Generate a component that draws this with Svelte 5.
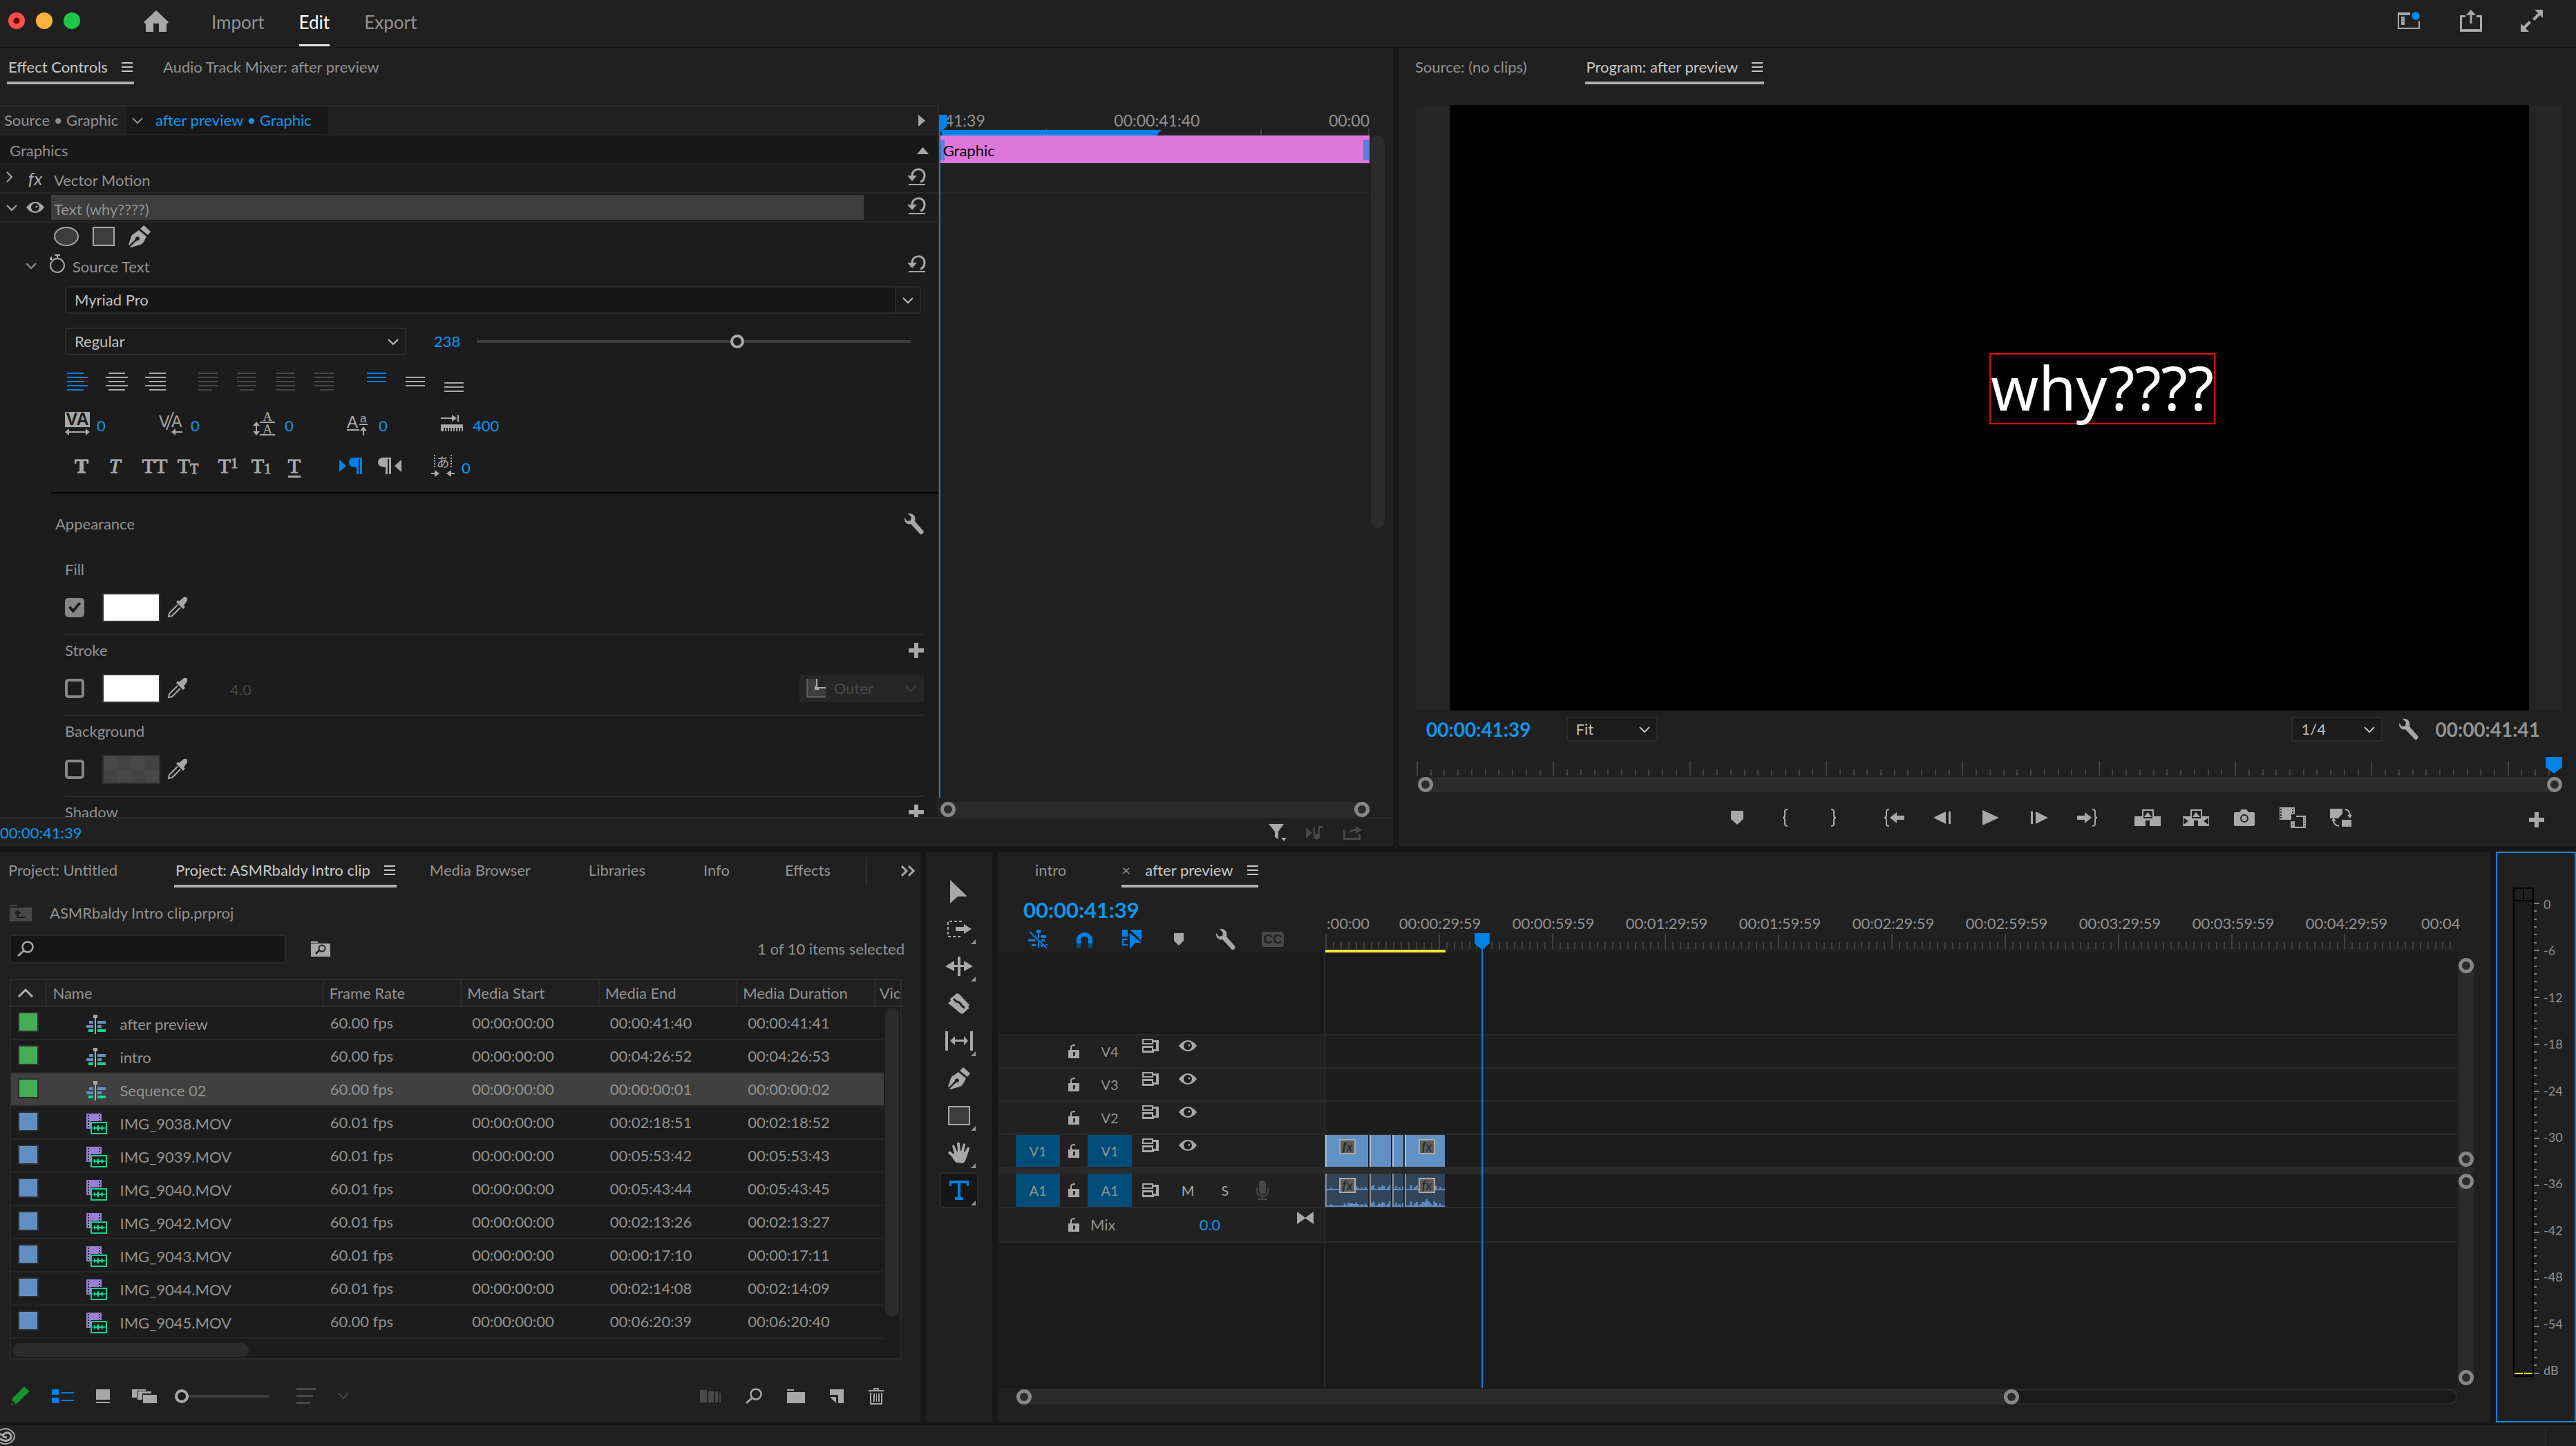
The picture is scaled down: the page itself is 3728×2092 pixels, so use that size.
<script lang="ts">
  // name: [width, height, svg body]
  const icons: Record<string, [number, number, string]> = {
    home: [36, 31, '<path d="M18 0 36 17 33 20V31H22V19H14V31H3V20L0 17Z"/>'],
    menu: [16, 14, '<path d="M0 0H16V2H0ZM0 6H16V8H0ZM0 12H16V14H0Z"/>'],
    workspace: [34, 28, '<path d="M0 2H18V6H2V24H30V14H32V26H0Z"/><path d="M5 8h5v12h-5z"/><path d="M7 10h1v2h-1zM7 14h1v2h-1z" fill="#202020"/><circle cx="26" cy="7" r="6" fill="#0082e6"/>'],
    share: [32, 32, '<path d="M16 0 23 8H17.500V20H14.500V8H9ZM0 8H8V11H3V28H29V11H24V8H32V32H0Z"/>'],
    expand: [32, 32, '<path d="M20 0H32V12L28 8 20 16 17 13 25 5ZM12 32H0V20L4 24 12 16 15 19 7 27Z"/>'],
    down: [16, 9, '<path d="M1 1 8 8 15 1" fill="none" stroke="currentColor" stroke-width="2"/>'],
    right: [9, 16, '<path d="M1 1 8 8 1 15" fill="none" stroke="currentColor" stroke-width="2"/>'],
    sort: [22, 13, '<path d="M1 12 11 2 21 12" fill="none" stroke="currentColor" stroke-width="3"/>'],
    more: [22, 16, '<path d="M2 1 9 8 2 15M12 1 19 8 12 15" fill="none" stroke="currentColor" stroke-width="3"/>'],
    play1: [10, 17, '<path d="M0 0 10 8.500 0 17Z"/>'],
    up: [17, 10, '<path d="M8.500 0 17 10H0Z"/>'],
    reset: [28, 25, '<path d="M0 10H14L7 18Z"/><path d="M7 11C6-2 26-3 25 11Q24 18 19 19" fill="none" stroke="currentColor" stroke-width="3"/><path d="M2 22H26V24H2Z"/>'],
    eye: [26, 16, '<path d="M0 8Q6 0 13 0T26 8Q20 16 13 16T0 8Z"/><circle cx="13" cy="8" r="6" fill="#1c1c1c"/><circle cx="15" cy="7" r="1.500"/>'],
    ellipse: [36, 28, '<ellipse cx="18" cy="14" rx="17" ry="13" fill="#3d3d3d" stroke="currentColor" stroke-width="2"/>'],
    rect: [32, 28, '<path d="M1 1H31V27H1Z" fill="#3d3d3d" stroke="currentColor" stroke-width="2"/>'],
    pen: [32, 32, '<path d="M22 0 32 9 28 14 17 5ZM15 7 26 16 22 24Q20 27 17 28L4 32 2 31 12 22A3 3 0 1 0 10 20L1 29 0 28 4 16Q5 13 8 12Z"/>'],
    watch: [24, 27, '<circle cx="12" cy="16" r="10" fill="none" stroke="currentColor" stroke-width="2"/><path d="M8 0H16V2H13V6H11V2H8ZM1 5 4 3V8H1Z"/>'],
    wrench: [28, 30, '<path d="M5 0 10 5 9 10 4 11 0 6C-1 12 4 17 9 15L23 30Q26 31 28 26L15 11C17 4 12-1 5 0Z"/>'],
    plus: [22, 22, '<path d="M8 0H14V8H22V14H14V22H8V14H0V8H8Z"/>'],
    dropper: [30, 30, '<path d="M17 6 24 0Q30-1 29 5L24 12 26 14 23 17 13 7 16 4Z"/><path d="M15 11 3 23 2 28 7 27 19 15" fill="none" stroke="currentColor" stroke-width="2"/>'],
    outer: [28, 28, '<path d="M0 0H14V14H28V28H0Z" fill="#3d3d3d"/><path d="M1 0V26H28" fill="none" stroke="#5a5a5a" stroke-width="2"/><path d="M14 0H16V12H28V14H18V16H12V10H14Z"/>'],
    alignL: [32, 26, '<path d="M0 0H24V2H0ZM0 6H30V8H0ZM0 12H24V14H0ZM0 18H30V20H0ZM0 24H24V26H0Z"/>'],
    alignC: [32, 26, '<path d="M4 0H28V2H4ZM0 6H32V8H0ZM4 12H28V14H4ZM0 18H32V20H0ZM4 24H28V26H4Z"/>'],
    alignR: [32, 26, '<path d="M7 0H31V2H7ZM1 6H31V8H1ZM7 12H31V14H7ZM1 18H31V20H1ZM7 24H31V26H7Z"/>'],
    justL: [28, 26, '<path d="M0 0H28V2H0ZM0 6H28V8H0ZM0 12H28V14H0ZM0 18H28V20H0ZM0 24H20V26H0Z"/>'],
    justC: [28, 26, '<path d="M0 0H28V2H0ZM0 6H28V8H0ZM0 12H28V14H0ZM0 18H28V20H0ZM4 24H24V26H4Z"/>'],
    justA: [28, 26, '<path d="M0 0H28V2H0ZM0 6H28V8H0ZM0 12H28V14H0ZM0 18H28V20H0ZM0 24H28V26H0Z"/>'],
    justR: [28, 26, '<path d="M0 0H28V2H0ZM0 6H28V8H0ZM0 12H28V14H0ZM0 18H28V20H0ZM8 24H28V26H8Z"/>'],
    top: [28, 26, '<path d="M0 0H28V2H0ZM0 6H28V8H0ZM0 12H28V14H0Z"/>'],
    middle: [28, 26, '<path d="M0 6H28V8H0ZM0 12H28V14H0ZM0 18H28V20H0Z"/>'],
    bottom: [28, 26, '<path d="M0 14H28V16H0ZM0 20H28V22H0ZM0 26H28V28H0Z"/>'],
    tracking: [36, 34, '<path d="M0 0H36V22H0Z"/><text x="18" y="19" text-anchor="middle" font-size="25" font-weight="bold" font-family="Liberation Sans" fill="#1c1c1c">VA</text><path d="M0 29 6 24V28H30V24L36 29 30 34V30H6V34Z"/>'],
    kerning: [36, 34, '<text x="0" y="22" font-size="23" font-family="Liberation Sans">V</text><text x="18" y="22" font-size="23" font-family="Liberation Sans">A</text><path d="M20 0H22L12 26H10Z"/><path d="M18 29 24 24V28H34V30H24V34Z"/>'],
    leading: [36, 34, '<path d="M5 14 10 20H6V28H10L5 34 0 28H4V20H0ZM10 14H32V16H10ZM10 32H32V34H10Z"/><text x="21" y="13" text-anchor="middle" font-size="19" font-family="Liberation Serif">A</text><text x="21" y="31" text-anchor="middle" font-size="19" font-family="Liberation Serif">A</text>'],
    baseline: [36, 34, '<text x="0" y="23" font-size="24" font-family="Liberation Sans">A</text><text x="19" y="15" font-size="17" font-family="Liberation Sans">a</text><path d="M0 25H18V27H0ZM18 17H30V19H18ZM24 21 29 27H25V34H23V27H19Z"/>'],
    tab: [36, 34, '<path d="M0 8H16V4L23 9 16 14V10H0ZM24 4H26V14H24Z"/><path d="M0 18H32V28H30V23H28V28H26V23H24V28H22V23H20V28H18V23H16V28H14V23H12V28H10V23H8V28H6V23H4V28H0Z"/>'],
    ltr: [34, 24, '<path d="M0 3 10 12 0 21ZM22 0H33V24H30V2H28V24H25V14Q14 14 14 7T22 0Z"/>'],
    rtl: [34, 24, '<path d="M34 3 24 12 34 21ZM8 0H19V24H16V2H14V24H11V14Q0 14 0 7T8 0Z"/>'],
    tsume: [34, 32, '<text x="17" y="18" text-anchor="middle" font-size="19" font-family="Noto Sans CJK JP">あ</text><path d="M5 0V20M29 0V20" fill="none" stroke="currentColor" stroke-width="2" stroke-dasharray="2"/><path d="M0 26H5V22L12 27 5 32V28H0ZM34 26H29V22L22 27 29 32V28H34Z"/>'],
    funnel: [26, 26, '<path d="M0 0H22L14 11V22L9 19V11Z"/><path d="M18 20H26L22 25Z"/>'],
    loop: [26, 20, '<path d="M0 2 9 10 0 18ZM11 2H13V18H11ZM18 0H25V3H20V15A4 4 0 1 1 18 12Z"/>'],
    send: [28, 20, '<path d="M0 6H3V17H22V12H25V20H0ZM8 12Q8 4 18 4V0L27 6 18 11V7Q11 7 8 12Z"/>'],
    marker: [18, 20, '<path d="M0 0H18V12L9 20 0 12Z"/>'],
    braceL: [9, 26, '<path d="M8 1Q4 1 4 4V10Q4 13 1 13 4 13 4 16V22Q4 25 8 25" fill="none" stroke="currentColor" stroke-width="2"/>'],
    braceR: [9, 26, '<path d="M1 1Q5 1 5 4V10Q5 13 8 13 5 13 5 16V22Q5 25 1 25" fill="none" stroke="currentColor" stroke-width="2"/>'],
    goIn: [30, 26, '<path d="M8 1Q4 1 4 4V10Q4 13 1 13 4 13 4 16V22Q4 25 8 25" fill="none" stroke="currentColor" stroke-width="2"/><path d="M9 13 19 5V10H30V16H19V21Z"/>'],
    goOut: [30, 26, '<path d="M22 1Q26 1 26 4V10Q26 13 29 13 26 13 26 16V22Q26 25 22 25" fill="none" stroke="currentColor" stroke-width="2"/><path d="M21 13 11 5V10H0V16H11V21Z"/>'],
    stepBack: [26, 18, '<path d="M0 9 18 0V18ZM22 0H25V18H22Z"/>'],
    play: [24, 22, '<path d="M0 0 24 11 0 22Z"/>'],
    stepOn: [26, 18, '<path d="M26 9 8 0V18ZM1 0H4V18H1Z"/>'],
    lift: [38, 24, '<path d="M0 10H38V24H22V16H16V24H0Z"/><path d="M11 0H28V14H11Z"/><path d="M13 2H26V13H13Z" fill="#202020"/><path d="M19 4 25 11H14Z"/>'],
    extract: [38, 24, '<path d="M0 10H38V24H22V16H16V24H0Z"/><path d="M11 0H28V14H11Z"/><path d="M13 2H26V13H13ZM1 12 8 17 1 22ZM37 12 30 17 37 22Z" fill="#202020"/><path d="M19 4 25 11H14Z"/>'],
    camera: [30, 24, '<path d="M2 4H8L11 0H18L21 4H28Q30 4 30 6V22Q30 24 28 24H2Q0 24 0 22V6Q0 4 2 4Z"/><circle cx="15" cy="13" r="6" fill="#202020"/><circle cx="15" cy="13" r="4"/>'],
    compare: [38, 30, '<path d="M0 0H22V10H17V18H0Z"/><path d="M2 2V17M19 2V10" stroke="#202020" stroke-width="2" stroke-dasharray="2"/><path d="M16 20H22V28H34V14H24V12H38V30H16Z"/><path d="M19 20V29M36 14V29" stroke="#202020" stroke-width="1" stroke-dasharray="2"/>'],
    proxy: [32, 28, '<path d="M0 1H18V8L12 15H0ZM17 17H31V27H17Z"/><path d="M22 2Q29 3 29 12M13 26Q5 25 5 17" fill="none" stroke="currentColor" stroke-width="2"/><path d="M25 10H32L29 15ZM2 19 5 14 9 19Z"/>'],
    folderUp: [32, 24, '<path d="M0 0H11V2H0ZM0 4H32V24H0Z"/><path d="M11 7 17 13H13V17H22V19H10V13H6Z" fill="#202020"/>'],
    search: [24, 24, '<circle cx="15" cy="9" r="7.500" fill="none" stroke="currentColor" stroke-width="2.500"/><path d="M10 14 1 22" stroke="currentColor" stroke-width="3"/>'],
    folderSearch: [28, 22, '<path d="M0 0H10V2H0ZM0 3H28V22H0Z"/><circle cx="16" cy="10" r="4.500" fill="none" stroke="#202020" stroke-width="2"/><path d="M12 13 7 18" stroke="#202020" stroke-width="2.500"/>'],
    sequence: [28, 28, '<path d="M4 9H10V13H4ZM16 9H28V13H16ZM0 15H10V19H0ZM16 15H22V19H16Z" fill="#6090c3"/><path d="M3 21H10V25H3ZM16 21H28V25H16Z" fill="#14d490"/><path d="M10 0H16V5H14V28H12V5H10Z"/>'],
    movie: [30, 30, '<path d="M0 0H22V11H6V22H0Z" fill="#9780d6"/><path d="M3 2V21M19 2V11" stroke="#1c1c1c" stroke-width="2" stroke-dasharray="2"/><path d="M7 13H29V29H7Z" fill="#1c1c1c" stroke="#14d490" stroke-width="2"/><path d="M8 20.500H11V17L13 20 15 20 17 16 19 20 21 20 23 17 24 20 28 20.500V21.500L24 22 23 25 21 22 19 22 17 26 15 22 13 22 11 25V21.500H8Z" fill="#14d490"/>'],
    pencil: [28, 28, '<path d="M20 0 28 7 10 24 1 27 3 17Z"/><path d="M3 20 7 24 2 26Z" fill="#202020"/>'],
    list: [32, 20, '<path d="M0 0H10V8H0ZM0 12H10V20H0ZM14 4H32V6H14ZM14 15H32V17H14Z"/>'],
    iconView: [20, 20, '<path d="M0 0H20V15H0ZM0 18H20V20H0Z"/>'],
    freeform: [36, 20, '<path d="M0 0H20V2H7V12H0ZM8 3H28V6H15V15H8ZM16 8H36V20H16Z"/>'],
    sortMenu: [28, 24, '<path d="M0 0H28V3H0ZM0 10H24V13H0ZM0 20H20V23H0Z"/>'],
    automate: [30, 18, '<path d="M0 0H10V18H0ZM12 2H20V18H12ZM22 2H26V18H22ZM28 4H30V18H28Z"/>'],
    folder: [26, 20, '<path d="M0 0H10V2H0ZM0 4H26V20H0Z"/>'],
    newItem: [20, 20, '<path d="M0 0H20V20H12V8H0ZM0 11H9V20Z"/>'],
    trash: [22, 24, '<path d="M0 3H22V5H0ZM7 0H15V4H13V2H9V4H7ZM2 7H4V22H18V7H20V24H2ZM7 8H9V20H7ZM11 8H12V20H11ZM14 8H16V20H14Z"/>'],
    cursor: [26, 34, '<path d="M0 0 25 24 11 24 0 34Z"/>'],
    trackSelect: [36, 24, '<path d="M22 1H2V23H20" fill="none" stroke="currentColor" stroke-width="2" stroke-dasharray="4 3"/><path d="M13 9H25V5L36 12 25 19V15H13Z"/>'],
    ripple: [40, 28, '<path d="M18 0H22V28H18ZM0 14 13 6V12H27V6L40 14 27 21V15H13V21Z"/>'],
    razor: [32, 32, '<path d="M0 15 4 12 3 9 13 1 16 2 31 18 29 21 31 22 21 31 18 30 1 16Z"/><path d="M8 9 12 13 16 14 21 20 24 22" fill="none" stroke="#202020" stroke-width="3"/>'],
    slip: [40, 28, '<path d="M0 0H4V28H0ZM36 0H40V28H36ZM7 14 14 7V12H27V7L33 14 27 20V15H14V20Z"/>'],
    box: [32, 28, '<path d="M1 1H31V27H1Z" fill="#3d3d3d" stroke="currentColor" stroke-width="2"/>'],
    hand: [32, 32, '<path d="M12 30Q8 27 6 22L0 16Q0 13 4 14L8 18 9 17 6 6Q7 3 9 5L13 14 14 13 13 2Q15-1 17 2L18 13 19 13 22 3Q24 1 25 4L23 14 24 15 28 8Q31 7 31 10L27 22Q25 29 21 31Z"/>'],
    type: [28, 28, '<path d="M0 0H28V8H25V4H16V24H20V28H8V24H12V4H3V8H0Z"/>'],
    nest: [28, 28, '<path d="M12 0H18V5H16V27H14V5H12ZM5 8H11V11H5ZM0 14H10V17H0ZM19 8H26V12H18ZM19 14H24V17H19ZM5 21H11V24H5ZM18 21H28V25H18Z"/><path d="M1 3 27 26" stroke="#202020" stroke-width="4"/><path d="M2 3 27 27" stroke="currentColor" stroke-width="2"/>'],
    magnet: [24, 25, '<path d="M3 18V11A9 9 0 0 1 20 11V18" fill="none" stroke="currentColor" stroke-width="6"/><path d="M0 18H6V25H0ZM17 18H23V25H17Z" fill="#004d7a"/>'],
    linked: [28, 28, '<path d="M0 0H8V10H0ZM11 0H28V16ZM0 13H8V15H2V21H8V23H0ZM11 5 28 19H19L11 28Z"/>'],
    tag: [14, 18, '<path d="M0 0H14V11L7 18 0 11Z"/>'],
    cc: [32, 22, '<rect width="32" height="22" rx="4"/><text x="16" y="17" text-anchor="middle" font-size="19" font-weight="bold" font-family="Liberation Sans" fill="#202020">CC</text>'],
    lock: [16, 20, '<path d="M0 8H16V20H0Z"/><path d="M4 8V4Q4 1 10 1" fill="none" stroke="currentColor" stroke-width="2"/><path d="M7 11H10V14L9 17H7Z" fill="#202020"/>'],
    sync: [24, 20, '<path d="M0 0H16V2H24V18H17V20H0V10H16V15H20V5H16V8H0ZM2 2V6H14V2ZM2 13V17H14V13Z" fill-rule="evenodd"/>'],
    mic: [18, 28, '<rect x="4" width="10" height="20" rx="5"/><path d="M1 10V15Q1 22 9 22T17 15V10" fill="none" stroke="currentColor" stroke-width="2"/><path d="M8 22H10V26H16V28H2V26H8Z"/>'],
    bowtie: [24, 18, '<path d="M0 0 10 7V11L0 18ZM24 0 14 7V11L24 18Z"/><path d="M10 8H14V10H10Z"/>'],
    cloud: [26, 24, '<path d="M0 3Q8-1 15 3 21 7 21 12T15 21Q8 25 0 21" fill="none" stroke="currentColor" stroke-width="2"/><path d="M0 15Q5 20 11 18 17 16 16 11 14 6 9 7 6 8 4 10M0 9Q3 9 6 13L10 14" fill="none" stroke="currentColor" stroke-width="3"/>'],
  };

  interface MediaItem {
    name: string;
    seq?: boolean;
    rate: string;
    end: string;
    duration: string;
  }

  const items: MediaItem[] = [
    { name: 'after preview', seq: true, rate: '60.00 fps', end: '00:00:41:40', duration: '00:00:41:41' },
    { name: 'intro', seq: true, rate: '60.00 fps', end: '00:04:26:52', duration: '00:04:26:53' },
    { name: 'Sequence 02', seq: true, rate: '60.00 fps', end: '00:00:00:01', duration: '00:00:00:02' },
    { name: 'IMG_9038.MOV', rate: '60.01 fps', end: '00:02:18:51', duration: '00:02:18:52' },
    { name: 'IMG_9039.MOV', rate: '60.01 fps', end: '00:05:53:42', duration: '00:05:53:43' },
    { name: 'IMG_9040.MOV', rate: '60.01 fps', end: '00:05:43:44', duration: '00:05:43:45' },
    { name: 'IMG_9042.MOV', rate: '60.01 fps', end: '00:02:13:26', duration: '00:02:13:27' },
    { name: 'IMG_9043.MOV', rate: '60.01 fps', end: '00:00:17:10', duration: '00:00:17:11' },
    { name: 'IMG_9044.MOV', rate: '60.01 fps', end: '00:02:14:08', duration: '00:02:14:09' },
    { name: 'IMG_9045.MOV', rate: '60.00 fps', end: '00:06:20:39', duration: '00:06:20:40' },
  ];
  let selected = $state('Sequence 02');

  const aligns = [['alignL', 'alignC', 'alignR'], ['justL', 'justC', 'justA', 'justR'], ['top', 'middle', 'bottom']];
  const metrics = [['tracking', '0'], ['kerning', '0'], ['leading', '0'], ['baseline', '0'], ['tab', '400']];
  const appearance = [
    { name: 'Fill', on: true },
    { name: 'Stroke', on: false },
    { name: 'Background', on: false },
  ];

  const transport = [
    ['marker', 'braceL', 'braceR'],
    ['goIn', 'stepBack', 'play', 'stepOn', 'goOut'],
    ['lift', 'extract', 'camera', 'compare', 'proxy'],
  ];
  const tools = ['cursor', 'trackSelect', 'ripple', 'razor', 'slip', 'pen', 'box', 'hand', 'type'];
  const plainTools = ['cursor', 'razor', 'pen'];
  let tool = $state('type');

  const timelineTools = ['nest', 'magnet', 'linked', 'tag', 'wrench', 'cc'];
  const rulerLabels = ['00:00:29:59', '00:00:59:59', '00:01:29:59', '00:01:59:59', '00:02:29:59', '00:02:59:59', '00:03:29:59', '00:03:59:59', '00:04:29:59'];
  const videoTracks = ['V4', 'V3', 'V2', 'V1'];

  // clip lengths as a share of the visible timeline
  const clips = [
    { w: 3.8, fx: true, wave: [0, 0, 2, 0, 0, 0, 0, 0, 0, 3, 0, 4, 3, 3, 2, 4, 2, 0, 2, 0, 3, 0] },
    { w: 1.85, fx: false, wave: [4, 6, 0, 0, 3, 2, 5, 4, 0, 2, 6] },
    { w: 1, fx: false, wave: [0, 4, 0, 2, 0, 4] },
    { w: 3.55, fx: true, wave: [0, 0, 6, 0, 3, 5, 0, 2, 5, 5, 9, 6, 3, 0, 6, 4, 0, 3, 0, 0] },
  ];

  const wavePath = (wave: number[], base: number) =>
    wave.map((v, i) => `M${i * 3} ${base - v}h3V${base + 2}h-3z`).join('');

  const dbLabels = ['0', '-6', '-12', '-18', '-24', '-30', '-36', '-42', '-48', '-54', 'dB'];
</script>

{#snippet icon(name: string)}
  {@const [w, h, body] = icons[name]}
  <svg class="icon" width={w} height={h} viewBox="0 0 {w} {h}" aria-hidden="true">{@html body}</svg>
{/snippet}

{#snippet zoomBar(cls: string)}
  <div class="zoombar {cls}"><i></i><i></i></div>
{/snippet}

<div class="app">
  <header class="topbar">
    <div class="lights"><i class="red"></i><i class="amber"></i><i class="green"></i></div>
    <button class="home" aria-label="Home">{@render icon('home')}</button>
    <nav>
      <a href="#import">Import</a>
      <a href="#edit" class="active">Edit</a>
      <a href="#export">Export</a>
    </nav>
    <div class="top-actions">
      <button aria-label="Workspaces">{@render icon('workspace')}</button>
      <button aria-label="Quick export">{@render icon('share')}</button>
      <button aria-label="Full screen">{@render icon('expand')}</button>
    </div>
  </header>

  <div class="row upper">
    <section class="panel effects">
      <div class="tabs">
        <button class="tab active">Effect Controls {@render icon('menu')}</button>
        <button class="tab">Audio Track Mixer: after preview</button>
      </div>

      <div class="fx-body">
        <div class="fx-list">
          <div class="fx-row crumbs">
            <span class="source">Source • Graphic</span>
            <span class="clip-name">{@render icon('down')}<a href="#clip">after preview • Graphic</a></span>
            <button class="end wide" aria-label="Show timeline">{@render icon('play1')}</button>
          </div>
          <div class="fx-row graphics">Graphics <button class="end" aria-label="Collapse">{@render icon('up')}</button></div>
          <div class="fx-row">
            <button class="twirl small" aria-label="Expand">{@render icon('right')}</button>
            <span class="fx">fx</span>
            <span class="fx-name">Vector Motion</span>
            <button class="reset" aria-label="Reset">{@render icon('reset')}</button>
          </div>
          <div class="fx-row">
            <button class="twirl" aria-label="Collapse">{@render icon('down')}</button>
            <span class="fx">{@render icon('eye')}</span>
            <span class="fx-name chosen">Text (why????)</span>
            <button class="reset" aria-label="Reset">{@render icon('reset')}</button>
          </div>
          <div class="fx-row plain masks">
            <button aria-label="Ellipse mask">{@render icon('ellipse')}</button>
            <button aria-label="Rectangle mask">{@render icon('rect')}</button>
            <button aria-label="Pen mask">{@render icon('pen')}</button>
          </div>
          <div class="fx-row plain source-text">
            {@render icon('down')}
            <button aria-label="Toggle animation">{@render icon('watch')}</button>
            <span>Source Text</span>
            <button class="reset" aria-label="Reset">{@render icon('reset')}</button>
          </div>

          <div class="text-props">
            <div class="select font">
              <select aria-label="Font"><option>Myriad Pro</option></select>
              <span>{@render icon('down')}</span>
            </div>
            <div class="style-row">
              <div class="select style">
                <select aria-label="Font style"><option>Regular</option></select>
                <span>{@render icon('down')}</span>
              </div>
              <button class="num">238</button>
              <input type="range" aria-label="Font size" min="0" max="395" value="238" />
            </div>
            <div class="aligns">
              {#each aligns as group, g}
                <div>
                  {#each group as name, i}
                    <button class:blue={i === 0 && g !== 1} class:dim={g === 1} aria-label={name}>{@render icon(name)}</button>
                  {/each}
                </div>
              {/each}
            </div>
            <div class="metrics">
              {#each metrics as [name, value]}
                <div>{@render icon(name)}<button class="num" aria-label={name}>{value}</button></div>
              {/each}
            </div>
            <div class="faux">
              <div>
                <button aria-label="Faux bold"><b>T</b></button>
                <button aria-label="Faux italic"><em>T</em></button>
              </div>
              <div>
                <button aria-label="All caps">TT</button>
                <button aria-label="Small caps">T<small>T</small></button>
              </div>
              <div>
                <button aria-label="Superscript">T<sup>1</sup></button>
                <button aria-label="Subscript">T<sub>1</sub></button>
                <button aria-label="Underline"><u>T</u></button>
              </div>
              <div class="direction">
                <button class="blue" aria-label="Left to right">{@render icon('ltr')}</button>
                <button aria-label="Right to left">{@render icon('rtl')}</button>
              </div>
              <div class="tsume">{@render icon('tsume')}<button class="num" aria-label="Tsume">0</button></div>
            </div>
          </div>

          <div class="appearance">
            <div class="appearance-head">Appearance <button aria-label="Settings">{@render icon('wrench')}</button></div>
            {#each appearance as part}
              <div class="part">
                <div class="part-head">
                  {part.name}
                  {#if part.name === 'Stroke'}<button aria-label="Add stroke">{@render icon('plus')}</button>{/if}
                </div>
                <div class="part-body">
                  <input type="checkbox" aria-label={part.name} checked={part.on} />
                  <button class="swatch" class:checker={part.name === 'Background'} aria-label="{part.name} colour"></button>
                  <button aria-label="Pick colour">{@render icon('dropper')}</button>
                  {#if part.name === 'Stroke'}
                    <span class="width">4.0</span>
                    <div class="select outer">
                      {@render icon('outer')}
                      <select aria-label="Stroke type" disabled><option>Outer</option></select>
                      <span>{@render icon('down')}</span>
                    </div>
                  {/if}
                </div>
              </div>
            {/each}
            <div class="part-head">Shadow <button aria-label="Add shadow">{@render icon('plus')}</button></div>
          </div>
        </div>

        <div class="mini">
          <div class="mini-ruler">
            <div class="mini-labels"><span>41:39</span><span>00:00:41:40</span><span>00:00</span></div>
            <div class="mini-ticks"><i></i><i></i><i></i><i></i></div>
            <div class="mini-range"></div>
          </div>
          <div class="mini-main">
            <div class="mini-lane">
              <div class="mini-clip">Graphic</div>
              <div class="mini-row"></div>
            </div>
            <div class="mini-scroll"></div>
          </div>
          <div class="mini-zoom">{@render zoomBar('')}</div>
          <div class="mini-head"></div>
        </div>
      </div>

      <div class="fx-foot">
        <span class="tc">00:00:41:39</span>
        <button aria-label="Filter">{@render icon('funnel')}</button>
        <button class="dim" aria-label="Play audio">{@render icon('loop')}</button>
        <button class="dim" aria-label="Export">{@render icon('send')}</button>
      </div>
    </section>

    <section class="panel program">
      <div class="tabs">
        <button class="tab">Source: (no clips)</button>
        <button class="tab active">Program: after preview {@render icon('menu')}</button>
      </div>
      <div class="monitor">
        <div class="frame"><span class="title">why????</span></div>
      </div>
      <div class="monitor-bar">
        <span class="tc big">00:00:41:39</span>
        <div class="select">
          <select aria-label="Zoom level"><option>Fit</option></select>
          <span>{@render icon('down')}</span>
        </div>
        <div class="select res">
          <select aria-label="Playback resolution"><option>1/4</option></select>
          <span>{@render icon('down')}</span>
        </div>
        <button aria-label="Settings">{@render icon('wrench')}</button>
        <span class="tc big grey">00:00:41:41</span>
      </div>
      <div class="monitor-ruler">
        {#each { length: 84 } as _, i}<i class:major={i % 10 === 0}></i>{/each}
        <span class="head"></span>
      </div>
      {@render zoomBar('full')}
      <div class="transport">
        {#each transport as group}
          <div>
            {#each group as name}<button aria-label={name}>{@render icon(name)}</button>{/each}
          </div>
        {/each}
        <button class="add" aria-label="Button editor">{@render icon('plus')}</button>
      </div>
    </section>
  </div>

  <div class="row lower">
    <section class="panel project">
      <div class="tabs">
        <button class="tab">Project: Untitled</button>
        <button class="tab active">Project: ASMRbaldy Intro clip {@render icon('menu')}</button>
        <button class="tab">Media Browser</button>
        <button class="tab">Libraries</button>
        <button class="tab">Info</button>
        <button class="tab">Effects</button>
        <button class="overflow" aria-label="More panels">{@render icon('more')}</button>
      </div>
      <div class="path"><span class="dim">{@render icon('folderUp')}</span>ASMRbaldy Intro clip.prproj</div>
      <div class="find">
        <label class="search">{@render icon('search')}<input type="text" aria-label="Search" /></label>
        <button aria-label="New search bin">{@render icon('folderSearch')}</button>
        <span>1 of 10 items selected</span>
      </div>
      <div class="media">
        <table>
          <colgroup><col class="c-label" /><col class="c-name" /><col /><col /><col /><col /><col class="c-rest" /></colgroup>
          <thead>
            <tr>
              <th aria-label="Label">{@render icon('sort')}</th>
              <th>Name</th><th>Frame Rate</th><th>Media Start</th><th>Media End</th><th>Media Duration</th><th>Vic</th>
            </tr>
          </thead>
          <tbody>
            {#each items as item}
              <tr class:selected={selected === item.name} onclick={() => (selected = item.name)}>
                <td><i class="label" class:green={item.seq}></i></td>
                <td><span class="name"><span>{@render icon(item.seq ? 'sequence' : 'movie')}</span>{item.name}</span></td>
                <td>{item.rate}</td>
                <td>00:00:00:00</td>
                <td>{item.end}</td>
                <td>{item.duration}</td>
                <td></td>
              </tr>
            {/each}
          </tbody>
        </table>
        <div class="h-scroll"></div>
        <div class="v-scroll"><i></i></div>
      </div>
      <div class="project-foot">
        <button class="pencil" aria-label="Writable">{@render icon('pencil')}</button>
        <button class="blue" aria-label="List view">{@render icon('list')}</button>
        <button aria-label="Icon view">{@render icon('iconView')}</button>
        <button aria-label="Freeform view">{@render icon('freeform')}</button>
        <input type="range" aria-label="Thumbnail size" min="0" max="100" value="0" />
        <button class="dim" aria-label="Sort">{@render icon('sortMenu')}</button>
        <button class="dim" aria-label="Sort options">{@render icon('down')}</button>
        <div class="right">
          <button class="dim" aria-label="Automate">{@render icon('automate')}</button>
          <button aria-label="Find">{@render icon('search')}</button>
          <button aria-label="New bin">{@render icon('folder')}</button>
          <button aria-label="New item">{@render icon('newItem')}</button>
          <button aria-label="Clear">{@render icon('trash')}</button>
        </div>
      </div>
    </section>

    <section class="panel tools">
      {#each tools as name}
        <button class:on={tool === name} class:corner={!plainTools.includes(name)} aria-label={name} onclick={() => (tool = name)}>
          {@render icon(name)}
        </button>
      {/each}
    </section>

    <section class="panel timeline">
      <div class="tabs">
        <button class="tab">intro</button>
        <button class="tab active"><span class="close">×</span>after preview {@render icon('menu')}</button>
      </div>
      <div class="tl-head">
        <div class="tl-left">
          <span class="tc huge">00:00:41:39</span>
          <div class="tl-tools">
            {#each timelineTools as name, i}
              <button class:blue={i < 3} class:dim={name === 'cc'} aria-label={name}>{@render icon(name)}</button>
            {/each}
          </div>
        </div>
        <div class="tl-ruler">
          <div class="tl-labels">
            <span class="half">:00:00</span>
            {#each rulerLabels as label}<span>{label}</span>{/each}
            <span class="half last">00:04</span>
          </div>
          <div class="tl-ticks">{#each { length: 150 } as _, i}<i class:major={i % 15 === 0}></i>{/each}</div>
          <div class="tl-range"></div>
        </div>
      </div>

      <div class="tl-body">
        <div class="half-body video">
          <div class="lanes">
            <div class="blank"><div></div></div>
            {#each videoTracks as track}
              <div class="track">
                <div class="track-head">
                  <span class="patch" class:on={track === 'V1'}>{track === 'V1' ? 'V1' : ''}</span>
                  <button class="lock" aria-label="Lock {track}">{@render icon('lock')}</button>
                  <button class="patch" class:on={track === 'V1'}>{track}</button>
                  <button class="raised" aria-label="Sync lock">{@render icon('sync')}</button>
                  <button class="raised" aria-label="Toggle output">{@render icon('eye')}</button>
                </div>
                <div class="lane">
                  {#if track === 'V1'}
                    {#each clips as clip}
                      <div class="clip" style="width: {clip.w}%">{#if clip.fx}<span class="badge">fx</span>{/if}</div>
                    {/each}
                  {/if}
                </div>
              </div>
            {/each}
          </div>
          {@render zoomBar('vert')}
        </div>
        <div class="splitter"></div>
        <div class="half-body audio">
          <div class="lanes">
            <div class="track">
              <div class="track-head">
                <span class="patch on">A1</span>
                <button class="lock" aria-label="Lock A1">{@render icon('lock')}</button>
                <button class="patch on">A1</button>
                <button aria-label="Sync lock">{@render icon('sync')}</button>
                <button class="letter">M</button>
                <button class="letter">S</button>
                <button class="dim" aria-label="Voice-over">{@render icon('mic')}</button>
              </div>
              <div class="lane">
                {#each clips as clip}
                  <div class="clip sound" style="width: {clip.w}%">
                    <svg viewBox="0 0 {clip.wave.length * 3} 48" preserveAspectRatio="none" aria-hidden="true">
                      <path d={wavePath(clip.wave, 22) + wavePath(clip.wave, 46)} />
                    </svg>
                    {#if clip.fx}<span class="badge">fx</span>{/if}
                  </div>
                {/each}
              </div>
            </div>
            <div class="track">
              <div class="track-head mix">
                <span class="patch"></span>
                <button class="lock" aria-label="Lock mix">{@render icon('lock')}</button>
                <span class="mix-name">Mix</span>
                <button class="num">0.0</button>
                <button class="bowtie" aria-label="Keyframes">{@render icon('bowtie')}</button>
              </div>
              <div class="lane"></div>
            </div>
            <div class="blank"><div></div></div>
          </div>
          {@render zoomBar('vert')}
        </div>
        <div class="playhead-area"><div class="playhead"></div></div>
      </div>
      <div class="tl-zoom">{@render zoomBar('')}</div>
    </section>

    <section class="panel meters">
      <div class="meter">
        <div class="peak"><i></i><i></i></div>
        <div class="level"><i></i><i></i></div>
      </div>
      <div class="db-ticks">{#each { length: 61 } as _, i}<i class:major={i % 6 === 0}></i>{/each}</div>
      <div class="db-labels">{#each dbLabels as label}<span>{label}</span>{/each}</div>
    </section>
  </div>

  <footer class="status">{@render icon('cloud')}<i></i></footer>
</div>

<style>
  :global(body) {
    margin: 0;
    background: #161616;
  }

  .app, .app * {
    box-sizing: border-box;
  }

  .app {
    display: flex;
    flex-direction: column;
    height: 100vh;
    overflow: hidden;
    font-family: Lato, "Noto Sans", sans-serif;
    font-size: 22px;
    line-height: 28px;
    color: #929292;
    white-space: nowrap;
  }

  button, select, input {
    font: inherit;
    color: inherit;
    background: none;
    border: 0;
    padding: 0;
    margin: 0;
  }

  button {
    display: flex;
    align-items: center;
    justify-content: center;
    color: #a8a8a8;
  }

  a {
    color: inherit;
    text-decoration: none;
  }

  .icon {
    display: block;
    flex: none;
    fill: currentColor;
    overflow: visible;
    color: inherit;
  }

  .blue { color: #0082e6; }
  .dim { color: #484848; }
  .num, .tc { color: #0c98ee; }

  .topbar {
    flex: none;
    display: flex;
    align-items: center;
    height: 68px;
    margin-bottom: 2px;
    background: #202020;
    font-size: 26px;
  }

  .lights {
    display: flex;
    gap: 16px;
    padding: 0 92px 8px 12px;
  }

  .lights i {
    width: 24px;
    height: 24px;
    border-radius: 50%;
  }

  .lights .red { background: radial-gradient(circle, #6d0000 4px, #ff4f4d 5px); }
  .lights .amber { background: #ffb23e; }
  .lights .green { background: #1dc548; }

  .home { padding-bottom: 8px; }

  nav {
    display: flex;
    gap: 50px;
    height: 100%;
    margin-left: 62px;
  }

  nav a {
    height: 67px;
    line-height: 64px;
    border-bottom: 3px solid transparent;
  }

  nav .active {
    color: #fff;
    border-color: #e6e6e6;
  }

  .top-actions {
    display: flex;
    gap: 56px;
    margin: 0 48px 8px auto;
  }

  .row {
    display: grid;
    gap: 8px;
    min-height: 0;
  }

  .upper {
    flex: 1154;
    grid-template: minmax(0, 1fr) / minmax(0, 2016fr) minmax(0, 1704fr);
  }

  .lower {
    flex: 826;
    grid-template: minmax(0, 1fr) / minmax(0, 1332fr) 96px minmax(0, 2160fr) 116px;
    margin-top: 8px;
  }

  .panel {
    display: flex;
    flex-direction: column;
    min-width: 0;
    background: #202020;
    overflow: hidden;
  }

  .program { padding: 0 20px 0 26px; }

  .tabs {
    flex: none;
    display: flex;
    align-items: flex-start;
  }

  .tab {
    height: 52px;
    padding: 6px 2px 0;
    color: #929292;
    border-bottom: 4px solid transparent;
  }

  .tab.active {
    color: #c8c8c8;
    border-color: #b0b0b0;
  }

  .tab .icon { margin-left: 20px; }

  .effects .tabs, .program .tabs { height: 82px; }
  .effects .tabs { padding-left: 10px; gap: 40px; }
  .program .tabs { margin-left: -4px; gap: 82px; }

  /* effect controls */
  .fx-body {
    flex: 1;
    display: flex;
    min-height: 0;
    border-bottom: 2px solid #2a2a2a;
  }

  .fx-list {
    flex: 1358;
    min-width: 0;
    overflow: hidden;
    background: #1c1c1c;
    border-top: 2px solid #2a2a2a;
    border-right: 2px solid #2a2a2a;
  }

  .fx-row {
    display: flex;
    align-items: center;
    height: 42px;
    border-bottom: 2px solid #262626;
  }

  .fx-row.plain { border-color: transparent; }
  .crumbs { background: #202020; }
  .source { width: 184px; padding-left: 6px; }

  .clip-name {
    display: flex;
    align-items: center;
    gap: 18px;
    align-self: stretch;
    padding: 0 24px 0 7px;
    background: #181818;
  }

  .clip-name a { color: #0c98ee; }

  .end { margin: 0 13px 0 auto; }
  .end.wide { margin-right: 18px; }
  .graphics { background: #181818; padding: 4px 0 0 14px; }

  .twirl { width: 34px; }
  .twirl.small { padding: 0 8px 4px 0; }

  .fx {
    display: flex;
    justify-content: center;
    width: 34px;
    margin-right: 6px;
    color: #a8a8a8;
    font-size: 26px;
    font-style: italic;
  }

  .fx-name {
    width: 1176px;
    height: 36px;
    padding: 7px 4px 0;
  }

  .chosen { background: #3d3d3d; }
  .reset { margin: 0 16px 4px auto; }

  .masks { gap: 20px; padding-left: 78px; }
  .source-text { padding-left: 37px; }
  .source-text > span { padding-top: 4px; }
  .source-text button:first-of-type { margin: 0 10px 6px 18px; }

  .text-props {
    margin: 8px 0 0 74px;
    padding: 0 24px 8px 20px;
    border-bottom: 2px solid #000;
  }

  .select {
    position: relative;
    height: 40px;
    color: #c0c0c0;
    background: #1b1b1b;
    border: 2px solid #2b2b2b;
    border-radius: 4px;
  }

  .select select {
    appearance: none;
    width: 100%;
    height: 100%;
    padding: 0 12px;
    opacity: 1;
  }

  .select > span {
    position: absolute;
    top: 0;
    right: 0;
    bottom: 0;
    display: flex;
    align-items: center;
    padding: 0 9px;
    pointer-events: none;
  }

  .select.font { background: #161616; }

  .font > span {
    background: #1b1b1b;
    border-left: 2px solid #2b2b2b;
  }

  .style-row {
    display: flex;
    align-items: center;
    margin: 20px 14px 8px 0;
  }

  .style {
    width: 494px;
    margin-right: 40px;
  }

  input[type='range'] {
    appearance: none;
    height: 24px;
    background: linear-gradient(#3d3d3d, #3d3d3d) center / 100% 4px no-repeat;
  }

  input[type='range']::-webkit-slider-thumb {
    appearance: none;
    width: 20px;
    height: 20px;
    border: 4px solid #a8a8a8;
    border-radius: 50%;
    background: #1c1c1c;
  }

  .style-row input { flex: 1; margin-left: 24px; }

  .aligns, .metrics, .faux, .aligns div, .metrics div, .faux div {
    display: flex;
    align-items: center;
  }

  .aligns {
    gap: 20px;
    height: 60px;
    margin-left: -9px;
  }

  .aligns button { width: 56px; }

  .metrics { height: 62px; }

  .metrics div {
    gap: 10px;
    width: 136px;
    color: #a8a8a8;
  }

  .metrics .num, .tsume .num { padding-top: 6px; }

  .faux {
    gap: 10px;
    height: 60px;
    font-family: "Liberation Serif", serif;
    font-size: 30px;
  }

  .faux button {
    width: 48px;
    -webkit-text-stroke: 1px currentColor;
  }

  .faux small, .faux sub, .faux sup {
    font-size: 20px;
    line-height: 20px;
  }

  .faux small { align-self: flex-end; }
  .faux sup { align-self: flex-start; }
  .faux sub { align-self: flex-end; }
  .faux u { text-underline-offset: 4px; }
  .faux .direction { margin-left: 20px; }
  .faux .direction button { width: 56px; }

  .faux .tsume {
    gap: 10px;
    margin-left: 22px;
    color: #a8a8a8;
    font-family: Lato, sans-serif;
    font-size: 22px;
  }

  .faux .tsume .num {
    width: auto;
    -webkit-text-stroke: 0;
  }

  .appearance { padding: 0 20px 0 94px; }

  .appearance-head, .part-head, .part-body {
    display: flex;
    align-items: center;
  }

  .appearance-head {
    height: 88px;
    margin-left: -14px;
  }

  .appearance-head button, .part-head button { margin-left: auto; }
  .part-head { height: 44px; }

  .part {
    padding-bottom: 5px;
    border-bottom: 2px solid #2b2b2b;
  }

  .part-body { height: 66px; }

  input[type='checkbox'] {
    appearance: none;
    display: grid;
    place-items: center;
    width: 28px;
    height: 28px;
    margin-right: 26px;
    border: 4px solid #868686;
    border-radius: 5px;
  }

  input[type='checkbox']:checked { background: #868686; }

  input[type='checkbox']:checked::before {
    content: '';
    width: 18px;
    height: 16px;
    background: #1c1c1c;
    clip-path: polygon(0 50%, 16% 36%, 38% 62%, 84% 0, 100% 14%, 38% 100%);
  }

  .swatch {
    width: 84px;
    height: 42px;
    margin-right: 10px;
    background: #fff;
    border: 2px solid #303030;
  }

  .swatch.checker { background: repeating-conic-gradient(#434343 0 25%, #484848 0 50%) 0 0 / 40px 40px; }

  .width { margin-left: 61px; padding-top: 4px; color: #484848; }

  .select.outer {
    display: flex;
    align-items: center;
    width: 180px;
    margin-left: auto;
    padding-left: 8px;
    color: #a8a8a8;
    background: #262626;
    border-color: #262626;
  }

  .outer select { color: #4a4a4a; }
  .outer > span { color: #3d3d3d; }

  .mini {
    position: relative;
    flex: 658;
    display: flex;
    flex-direction: column;
    min-width: 0;
  }

  .mini-ruler {
    position: relative;
    height: 44px;
    margin-right: 34px;
    overflow: hidden;
  }

  .mini-labels {
    display: flex;
    justify-content: space-between;
    height: 34px;
    padding: 8px 0 0 8px;
    font-size: 23px;
  }

  .mini-ticks {
    display: flex;
    height: 10px;
  }

  .mini-ticks i {
    flex: 1;
    border-right: 2px solid #404040;
  }

  .mini-range {
    position: absolute;
    left: 4px;
    bottom: 0;
    width: 51%;
    height: 8px;
    background: #0082e6;
    clip-path: polygon(0 0, 100% 0, 98% 100%, 0 100%);
  }

  .mini-main {
    flex: 1;
    display: flex;
    gap: 2px;
    margin-right: 12px;
  }

  .mini-lane { flex: 1; }

  .mini-clip {
    height: 40px;
    padding: 7px 0 0 6px;
    line-height: 30px;
    color: #000;
    background: linear-gradient(#607cdc, #607cdc) left 6px / 8px 30px no-repeat, linear-gradient(#607cdc, #607cdc) right 6px / 9px 30px no-repeat, #df77db;
  }

  .mini-row {
    height: 44px;
    border: solid #272727;
    border-width: 2px 0;
  }

  .mini-scroll {
    width: 20px;
    height: 568px;
    background: #2b2b2b;
    border-radius: 10px;
  }

  .mini-zoom { margin: 2px 34px 0 2px; }

  .mini-head {
    position: absolute;
    top: 14px;
    left: 0;
    bottom: 28px;
    width: 2px;
    background: #0082e6;
  }

  .mini-head::before {
    content: '';
    position: absolute;
    width: 12px;
    height: 24px;
    background: #0082e6;
    clip-path: polygon(0 0, 100% 0, 100% 70%, 30% 100%, 0 100%);
  }

  .zoombar {
    display: flex;
    justify-content: space-between;
    align-items: center;
    height: 22px;
    background: #2b2b2b;
    border-radius: 11px;
  }

  .zoombar i {
    width: 22px;
    height: 22px;
    border: 5px solid #868686;
    border-radius: 50%;
  }

  .zoombar.vert {
    flex-direction: column;
    width: 22px;
    height: auto;
  }

  .video .zoombar { margin-top: 8px; }
  .audio .zoombar { margin-bottom: 4px; }

  .fx-foot {
    flex: none;
    display: flex;
    align-items: center;
    gap: 28px;
    height: 40px;
    padding: 2px 44px 0 0;
  }

  .fx-foot .tc { margin-right: auto; }

  /* program monitor */
  .monitor {
    flex: 1;
    padding: 0 48px;
    background: #252525;
    min-height: 0;
  }

  .frame {
    position: relative;
    height: 100%;
    background: #000;
  }

  .title {
    position: absolute;
    left: 50%;
    top: 41%;
    padding-bottom: 5px;
    font-family: "Noto Sans", sans-serif;
    font-size: 88px;
    line-height: 94px;
    color: #fff;
    border: 2px solid #f00010;
  }

  .monitor-bar {
    flex: none;
    display: flex;
    align-items: center;
    height: 62px;
    padding: 0 32px 8px 14px;
  }

  .tc.big {
    font-size: 28px;
    font-weight: bold;
  }

  .tc.grey { color: #929292; margin-left: 24px; }

  .monitor-bar .select {
    width: 132px;
    height: 36px;
    margin-left: 51px;
  }

  .monitor-bar .select.res { margin: 0 24px 0 auto; }

  .monitor-ruler {
    position: relative;
    flex: none;
    display: flex;
    align-items: flex-end;
    height: 32px;
    margin-bottom: 2px;
  }

  .monitor-ruler i {
    flex: 1;
    height: 9px;
    border-left: 2px solid #404040;
  }

  .monitor-ruler .major { height: 21px; }

  .monitor-ruler .head {
    position: absolute;
    right: 0;
    top: 5px;
    width: 24px;
    height: 24px;
    background: #0082e6;
    clip-path: polygon(0 0, 100% 0, 100% 62%, 50% 100%, 0 62%);
  }

  .zoombar.full { flex: none; margin-left: 2px; }

  .transport {
    flex: none;
    display: flex;
    gap: 17px;
    height: 78px;
    padding: 0 0 4px 208px;
  }

  .transport div { display: flex; }
  .transport div button { width: 70px; }
  .transport .add { margin-left: auto; padding-right: 26px; padding-top: 6px; }
  .transport div:first-child { margin-left: auto; }

  /* project */
  .project .tabs {
    height: 60px;
    padding-left: 10px;
  }

  .project .tab:nth-child(1) { margin-right: 80px; }
  .project .tab:nth-child(2) { margin-right: 46px; }
  .project .tab:nth-child(3), .project .tab:nth-child(4) { margin-right: 80px; }
  .project .tab:nth-child(5) { margin-right: 76px; }

  .overflow {
    height: 40px;
    margin: 8px 7px 0 auto;
    padding-left: 48px;
    border-left: 2px solid #303030;
  }

  .path {
    display: flex;
    align-items: center;
    gap: 26px;
    height: 58px;
    padding-left: 14px;
  }

  .find {
    display: flex;
    align-items: center;
    height: 46px;
    padding: 0 23px 0 14px;
  }

  .search {
    display: flex;
    align-items: center;
    gap: 10px;
    width: 400px;
    height: 42px;
    margin-right: 36px;
    padding-left: 9px;
    color: #a8a8a8;
    background: #161616;
    border: 2px solid #2a2a2a;
    border-radius: 4px;
  }

  .search input { flex: 1; outline: 0; }
  .find > span { margin-left: auto; }

  .media {
    position: relative;
    flex: 1;
    margin: 20px 27px 0 14px;
    background: #1c1c1c;
    border: 2px solid #2b2b2b;
    overflow: hidden;
  }

  table {
    width: 100%;
    table-layout: fixed;
    border-collapse: collapse;
  }

  col { width: 15.5%; }
  .c-label { width: 4%; }
  .c-name { width: 31.1%; }
  .c-rest { width: 2.9%; }

  th {
    height: 38px;
    padding: 0 0 0 8px;
    text-align: left;
    font-weight: normal;
    background: #202020;
    border-right: 2px solid #2b2b2b;
    border-bottom: 2px solid #2b2b2b;
    overflow: hidden;
  }

  td {
    height: 48px;
    padding: 0 0 0 16px;
    border-bottom: 2px solid #262626;
  }

  td:nth-child(1) { padding-left: 10px; }
  td:nth-child(2) { padding-left: 58px; }
  td:nth-child(3) { padding-left: 10px; }
  th:nth-child(1) { padding-left: 10px; color: #b0b0b0; }
  th:last-child { border-right: 0; padding-left: 6px; }
  .selected td { background: #404040; }

  .label {
    display: block;
    width: 30px;
    height: 29px;
    margin-bottom: 4px;
    background: #6090c3;
    border: 2px solid #2f2f2f;
  }

  .label.green { background: #45ae55; }

  .name {
    display: flex;
    align-items: center;
    padding-top: 4px;
  }

  .name span { width: 48px; color: #a8a8a8; }

  .h-scroll {
    width: 342px;
    height: 20px;
    margin: 6px 2px;
    background: #2b2b2b;
    border-radius: 10px;
  }

  .v-scroll {
    position: absolute;
    top: 40px;
    right: 0;
    bottom: 0;
    width: 24px;
    padding: 0 2px 60px;
    background: #1c1c1c;
  }

  .v-scroll i {
    display: block;
    height: 100%;
    background: #2b2b2b;
    border-radius: 10px;
  }

  .project-foot {
    flex: none;
    display: flex;
    align-items: center;
    gap: 32px;
    height: 91px;
    padding: 14px 53px 0 15px;
  }

  .pencil { color: #16942a; }

  .project-foot input {
    width: 136px;
    margin: 0 8px 0 -6px;
  }

  .project-foot .right {
    display: flex;
    align-items: center;
    gap: 36px;
    margin-left: auto;
  }

  /* tools */
  .tools {
    align-items: center;
    padding-top: 32px;
    gap: 2px;
  }

  .tools button {
    position: relative;
    width: 56px;
    height: 52px;
    border: 2px solid transparent;
    border-radius: 5px;
  }

  .tools .on {
    color: #0082e6;
    background: #161616;
    border-color: #2a2a2a;
  }

  .tools .corner::after {
    content: '';
    position: absolute;
    right: 2px;
    bottom: 2px;
    width: 7px;
    height: 7px;
    background: #929292;
    clip-path: polygon(100% 0, 100% 100%, 0 100%);
  }

  /* timeline */
  .timeline .tabs {
    height: 52px;
    padding-left: 52px;
    gap: 78px;
  }

  .timeline .tab.active { padding: 6px 0 0; }

  .close {
    width: 34px;
    text-align: left;
    color: #929292;
  }

  .tl-head {
    flex: none;
    display: flex;
    height: 94px;
    padding-right: 48px;
  }

  .tl-left {
    flex: none;
    width: 474px;
  }

  .tc.huge {
    display: block;
    padding: 14px 0 0 37px;
    height: 52px;
    font-size: 31px;
    line-height: 36px;
    font-weight: bold;
  }

  .tl-tools {
    display: flex;
    padding: 8px 0 0 24px;
  }

  .tl-tools button {
    width: 68px;
    height: 30px;
  }

  .tl-ruler {
    flex: 1;
    display: flex;
    flex-direction: column;
    min-width: 0;
  }

  .tl-labels {
    display: flex;
    padding: 38px 0 0 2px;
    margin-right: -4px;
    height: 67px;
  }

  .tl-labels span {
    width: 10%;
    text-align: center;
  }

  .tl-labels .half {
    width: 5%;
    text-align: left;
  }

  .tl-labels .last { padding-left: 26px; }

  .tl-ticks {
    display: flex;
    align-items: flex-end;
    height: 22px;
  }

  .tl-ticks i {
    flex: 1;
    height: 10px;
    border-left: 2px solid #404040;
  }

  .tl-ticks .major { height: 22px; }

  .tl-range {
    width: 10.6%;
    height: 4px;
    margin-top: auto;
    background: #f2e63a;
  }

  .tl-body {
    position: relative;
    flex: 1;
    display: flex;
    flex-direction: column;
    min-height: 0;
    padding-left: 2px;
  }

  .half-body {
    flex: 1;
    display: flex;
    gap: 2px;
    min-height: 0;
    padding-right: 24px;
  }

  .lanes {
    flex: 1;
    display: flex;
    flex-direction: column;
    min-width: 0;
  }

  .blank {
    flex: 1;
    background: #1a1a1a;
  }

  .blank div {
    width: 472px;
    height: 100%;
    border-right: 2px solid #2a2a2a;
  }

  .track {
    display: flex;
    height: 48px;
    background: #1d1d1d;
  }

  .video .track { border-top: 2px solid #2a2a2a; }
  .audio .track { height: 50px; border-bottom: 2px solid #2a2a2a; }

  .track-head {
    flex: none;
    display: flex;
    align-items: center;
    width: 472px;
    padding-left: 24px;
    background: #212121;
    border-right: 2px solid #2a2a2a;
    font-size: 20px;
  }

  .patch {
    display: flex;
    align-items: center;
    justify-content: center;
    width: 64px;
    height: 100%;
    color: #929292;
  }

  .patch.on { background: #004d7a; }
  .lock { width: 40px; }
  .track-head button:nth-child(n + 4) { width: 54px; }
  .track-head .raised { padding-bottom: 16px; }
  .mix-name { width: 150px; padding-left: 4px; font-size: 22px; }
  .mix .num { font-size: 22px; }
  .mix .bowtie { margin: 0 0 20px auto; }

  .lane {
    flex: 1;
    display: flex;
    gap: 2px;
    min-width: 0;
  }

  .clip {
    position: relative;
    height: 100%;
    background: #6190c4;
    border-left: 2px solid #b0c4dc;
  }

  .clip.sound {
    background: #30445a;
    border-color: #8a94a0;
  }

  .clip svg {
    display: block;
    width: 100%;
    height: 100%;
    fill: #5c8cc0;
  }

  .badge {
    position: absolute;
    top: 6px;
    left: 18px;
    width: 24px;
    height: 22px;
    font-size: 19px;
    font-style: italic;
    line-height: 18px;
    text-align: center;
    color: #222;
    background: #5c5c5c;
    border: 2px solid #b0aaa4;
  }

  .splitter {
    flex: none;
    height: 10px;
    margin-right: 24px;
    background: #2a2a2a;
  }

  .playhead-area {
    position: absolute;
    top: -28px;
    bottom: 0;
    left: 474px;
    right: 48px;
    pointer-events: none;
  }

  .playhead {
    width: 13.9%;
    height: 100%;
    border-right: 2px solid #0082e6;
  }

  .playhead::after {
    content: '';
    display: block;
    width: 22px;
    height: 24px;
    margin: 0 -12px 0 auto;
    background: #0082e6;
    clip-path: polygon(0 0, 100% 0, 100% 62%, 50% 100%, 0 62%);
  }

  .tl-zoom {
    flex: none;
    margin: 2px 48px 26px 27px;
    background: #1a1a1a;
    border-radius: 11px;
    box-shadow: inset 0 0 0 2px #2a2a2a;
  }

  .tl-zoom :global(.zoombar) { width: 69.6%; }

  /* audio meters */
  .meters {
    flex-direction: row;
    padding: 50px 0 64px 23px;
    border: 2px solid #0082e6;
  }

  .meter {
    display: flex;
    flex-direction: column;
    width: 30px;
    border: 2px solid #000;
    background: #1c1c1c;
  }

  .peak, .level { display: flex; }
  .peak { height: 18px; border-bottom: 2px solid #000; }
  .peak i { flex: 1; background: #202020; }
  .peak i:first-child { border-right: 2px solid #000; }
  .level { flex: 1; gap: 2px; }
  .level i { flex: 1; background: linear-gradient(#f2e63a, #f2e63a) left bottom 2px / 100% 2px no-repeat; }

  .db-ticks, .db-labels {
    display: flex;
    flex-direction: column;
    justify-content: space-between;
  }

  .db-ticks { padding: 22px 6px 4px 0; }
  .db-ticks i { width: 4px; height: 2px; background: #808080; }
  .db-ticks .major { width: 8px; }

  .db-labels {
    margin: 12px 0 -2px;
    font-size: 18px;
    line-height: 24px;
  }

  .status {
    flex: none;
    display: flex;
    justify-content: space-between;
    height: 30px;
    margin-top: 4px;
    padding: 4px 43px 0 0;
    color: #a8a8a8;
    background: #212121;
  }

  .status i { border-left: 2px solid #2b2b2b; }
</style>
